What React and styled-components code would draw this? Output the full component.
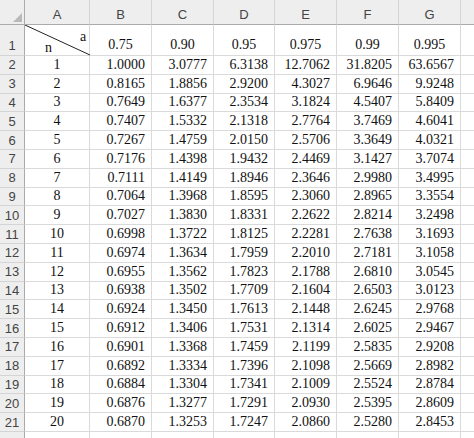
import React from "react";
import styled, { createGlobalStyle } from "styled-components";

const GlobalStyle = createGlobalStyle`
	html, body {
		margin: 0;
		padding: 0;
		background: #fff;
		overflow: hidden;
	}
`;

const cols = ["A", "B", "C", "D", "E", "F", "G", ""];
const probs = ["0.75", "0.90", "0.95", "0.975", "0.99", "0.995"];
const rows = [
	["1.0000", "3.0777", "6.3138", "12.7062", "31.8205", "63.6567"],
	["0.8165", "1.8856", "2.9200", "4.3027", "6.9646", "9.9248"],
	["0.7649", "1.6377", "2.3534", "3.1824", "4.5407", "5.8409"],
	["0.7407", "1.5332", "2.1318", "2.7764", "3.7469", "4.6041"],
	["0.7267", "1.4759", "2.0150", "2.5706", "3.3649", "4.0321"],
	["0.7176", "1.4398", "1.9432", "2.4469", "3.1427", "3.7074"],
	["0.7111", "1.4149", "1.8946", "2.3646", "2.9980", "3.4995"],
	["0.7064", "1.3968", "1.8595", "2.3060", "2.8965", "3.3554"],
	["0.7027", "1.3830", "1.8331", "2.2622", "2.8214", "3.2498"],
	["0.6998", "1.3722", "1.8125", "2.2281", "2.7638", "3.1693"],
	["0.6974", "1.3634", "1.7959", "2.2010", "2.7181", "3.1058"],
	["0.6955", "1.3562", "1.7823", "2.1788", "2.6810", "3.0545"],
	["0.6938", "1.3502", "1.7709", "2.1604", "2.6503", "3.0123"],
	["0.6924", "1.3450", "1.7613", "2.1448", "2.6245", "2.9768"],
	["0.6912", "1.3406", "1.7531", "2.1314", "2.6025", "2.9467"],
	["0.6901", "1.3368", "1.7459", "2.1199", "2.5835", "2.9208"],
	["0.6892", "1.3334", "1.7396", "2.1098", "2.5669", "2.8982"],
	["0.6884", "1.3304", "1.7341", "2.1009", "2.5524", "2.8784"],
	["0.6876", "1.3277", "1.7291", "2.0930", "2.5395", "2.8609"],
	["0.6870", "1.3253", "1.7247", "2.0860", "2.5280", "2.8453"]
];

const Sheet = styled.div`
	display: grid;
	grid-template-columns: 25px 65px 62px 62px 61px 62px 62px 62px 40px;
	grid-template-rows: 25px 31px repeat(21, 18.8px);
	width: 474px;
	height: 438px;
	overflow: hidden;
	background: #fff;
`;

const Corner = styled.div`
	position: relative;
	background: #eeeeee;
	border-right: 1px solid #ababab;
	border-bottom: 1px solid #ababab;
	&::after {
		content: "";
		position: absolute;
		right: 2px;
		bottom: 2px;
		width: 0;
		height: 0;
		border-left: 9px solid transparent;
		border-bottom: 9px solid #b9b9b9;
	}
`;

const ColHead = styled.div`
	display: flex;
	align-items: center;
	justify-content: center;
	padding-top: 4px;
	background: #eeeeee;
	border-right: 1px solid #d4d4d4;
	border-bottom: 1px solid #ababab;
	font-family: "Liberation Sans", Arial, sans-serif;
	font-size: 13px;
	color: #444;
`;

const RowHead = styled.div`
	display: flex;
	align-items: ${p => (p.tall ? "flex-end" : "center")};
	justify-content: center;
	padding-bottom: ${p => (p.tall ? "2px" : "0")};
	background: #eeeeee;
	border-right: 1px solid #ababab;
	border-bottom: 1px solid #d4d4d4;
	font-family: "Liberation Sans", Arial, sans-serif;
	font-size: 13px;
	color: #444;
`;

const Cell = styled.div`
	display: flex;
	align-items: ${p => (p.tall ? "flex-end" : "center")};
	justify-content: ${p => (p.right ? "flex-end" : "center")};
	padding: ${p => (p.tall ? "0 0 2px 0" : p.right ? "0 6px 0 0" : "0")};
	border-right: 1px solid #dadada;
	border-bottom: 1px solid #dadada;
	font-family: "Liberation Serif", "Times New Roman", serif;
	font-size: 14px;
	color: #111;
	white-space: nowrap;
`;

const DiagCell = styled.div`
	position: relative;
	border-right: 1px solid #dadada;
	border-bottom: 1px solid #dadada;
	font-family: "Liberation Serif", "Times New Roman", serif;
	font-size: 14px;
	color: #111;
	svg {
		position: absolute;
		left: 0;
		top: 0;
	}
`;

const Mark = styled.span`
	position: absolute;
	left: ${p => p.x}px;
	top: ${p => p.y}px;
	line-height: 1;
`;

const App = () => {
	return (
		<>
			<GlobalStyle />
			<Sheet>
				<Corner />
				{cols.map((c, i) => (
					<ColHead key={"h" + i}>{c}</ColHead>
				))}

				<RowHead tall>1</RowHead>
				<DiagCell>
					<svg width="65" height="31">
						<line x1="0" y1="0" x2="65" y2="30" stroke="#222" strokeWidth="1" />
					</svg>
					<Mark x={55} y={5}>a</Mark>
					<Mark x={20} y={16}>n</Mark>
				</DiagCell>
				{probs.map((p, i) => (
					<Cell tall key={"p" + i}>{p}</Cell>
				))}
				<Cell />

				{rows.map((r, ri) => (
					<React.Fragment key={"r" + ri}>
						<RowHead>{ri + 2}</RowHead>
						<Cell>{ri + 1}</Cell>
						{r.map((v, vi) => (
							<Cell right key={vi}>{v}</Cell>
						))}
						<Cell />
					</React.Fragment>
				))}

				<RowHead />
				{cols.map((c, i) => (
					<Cell key={"e" + i} />
				))}
			</Sheet>
		</>
	);
};

export default App;
